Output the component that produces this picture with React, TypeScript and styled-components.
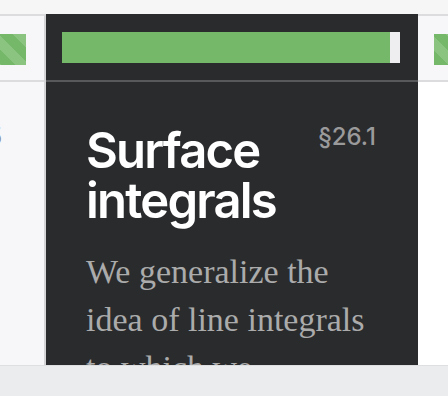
import styled, { createGlobalStyle, css } from "styled-components";

const GlobalStyle = createGlobalStyle`
  html, body {
    margin: 0;
    padding: 0;
    background: #f6f6f7;
  }
  * {
    box-sizing: border-box;
  }
`;

type Tone = "dark" | "side-light" | "side-white";

const cards: { tone: Tone; section: string; title: string; text: string; progress: number }[] = [
  {
    tone: "side-light",
    section: "§25.5",
    title: "Line integrals",
    text: "We integrate a function along a curve.",
    progress: 100,
  },
  {
    tone: "dark",
    section: "§26.1",
    title: "Surface integrals",
    text: "We generalize the idea of line integrals to which we integrate over surfaces.",
    progress: 97,
  },
  {
    tone: "side-white",
    section: "§26.2",
    title: "Flux integrals",
    text: "We measure how much of a vector field passes through a surface.",
    progress: 100,
  },
];

const App = () => {
  return (
    <>
      <GlobalStyle />
      <Page>
        <Stage>
          <Track>
            {cards.map((c) => (
              <Card key={c.section} tone={c.tone}>
                <CardHeader tone={c.tone}>
                  <Bar>
                    <Fill tone={c.tone} style={{ width: `${c.progress}%` }} />
                  </Bar>
                </CardHeader>
                <CardBody>
                  <TitleRow>
                    <Title tone={c.tone}>{c.title}</Title>
                    <Section tone={c.tone}>{c.section}</Section>
                  </TitleRow>
                  <Text tone={c.tone}>{c.text}</Text>
                </CardBody>
              </Card>
            ))}
          </Track>
        </Stage>
        <Footer />
      </Page>
    </>
  );
};

const Page = styled.div`
  display: flex;
  flex-direction: column;
  width: 448px;
  height: 396px;
  overflow: hidden;
`;

const Stage = styled.div`
  height: 365px;
  padding-top: 14px;
  overflow: hidden;
`;

const Track = styled.div`
  display: flex;
  height: 100%;
  margin-left: -326px;
`;

const Card = styled.div<{ tone: Tone }>`
  flex: 0 0 372px;
  height: 100%;
  overflow: hidden;
  display: flex;
  flex-direction: column;
  ${({ tone }) =>
    tone === "dark"
      ? css`
          background: #2a2b2d;
        `
      : css`
          background: ${tone === "side-light" ? "#f7f7f9" : "#ffffff"};
          border-top: 2px solid #dcdcde;
          ${tone === "side-light" ? "border-right: 2px solid #d4d4d6;" : ""}
        `}
`;

const CardHeader = styled.div<{ tone: Tone }>`
  flex: 0 0 auto;
  height: ${({ tone }) => (tone === "dark" ? "68px" : "66px")};
  padding: 18px 18px 0 16px;
  background: ${({ tone }) => (tone === "dark" ? "#2a2b2d" : "#f7f7f9")};
  border-bottom: 2px solid ${({ tone }) => (tone === "dark" ? "#58595b" : "#dcdcde")};
`;

const Bar = styled.div`
  height: 31px;
  background: #eeeef0;
  display: flex;
`;

const Fill = styled.div<{ tone: Tone }>`
  height: 100%;
  background: #75b86a;
  ${({ tone }) =>
    tone !== "dark" &&
    css`
      background: repeating-linear-gradient(
        45deg,
        #75b86a 0,
        #75b86a 10px,
        #8bc481 10px,
        #8bc481 20px
      );
    `}
`;

const CardBody = styled.div`
  padding: 44px 42px 0 40px;
`;

const TitleRow = styled.div`
  display: flex;
  justify-content: space-between;
  align-items: flex-start;
`;

const Title = styled.h1<{ tone: Tone }>`
  margin: 0;
  font-family: Inter, "Liberation Sans", sans-serif;
  font-weight: 600;
  font-size: 49px;
  line-height: 50px;
  letter-spacing: -1.8px;
  color: ${({ tone }) => (tone === "dark" ? "#ffffff" : "#2a2b2d")};
  max-width: 230px;
`;

const Section = styled.span<{ tone: Tone }>`
  font-family: Inter, "Liberation Sans", sans-serif;
  font-weight: 500;
  font-size: 24px;
  line-height: 24px;
  letter-spacing: 0;
  color: ${({ tone }) => (tone === "dark" ? "#9a9a9b" : "#8a8a8c")};
  margin-top: -1px;
`;

const Text = styled.p<{ tone: Tone }>`
  margin: 22px 0 0;
  font-family: "Liberation Serif", serif;
  font-size: 34px;
  line-height: 48px;
  color: ${({ tone }) => (tone === "dark" ? "#ababab" : "#555")};
  max-width: ${({ tone }) => (tone === "side-light" ? "240px" : "none")};
`;

const Footer = styled.div`
  flex: 1;
  background: #ebecee;
  border-top: 1px solid #dedfe1;
`;

export default App;
